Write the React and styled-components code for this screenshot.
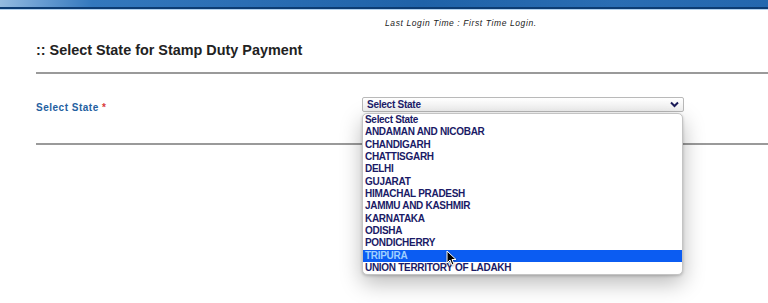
import styled, { createGlobalStyle } from 'styled-components'

const GlobalStyle = createGlobalStyle`
	body {
		margin: 0;
		background: #fff;
		font-family: 'Liberation Sans', Arial, sans-serif;
	}
`

const Page = styled.div`
	position: relative;
	width: 768px;
	height: 303px;
	overflow: hidden;
	background: #fff;
`

const TopBar = styled.div`
	height: 7px;
	background: linear-gradient(
		90deg,
		#94bbe0 0%,
		#6a9ed3 5%,
		#3378bd 12%,
		#2c6fb5 30%,
		#1f62a8 55%,
		#2a6db3 80%,
		#2467ae 100%
	);
	border-bottom: 2px solid #0c3c73;
	box-shadow: 0 1px 0 #b4d2ee;
`

const LoginInfo = styled.div`
	padding: 9px 0 0 385px;
	font-size: 8.5px;
	font-style: italic;
	letter-spacing: 0.6px;
	color: #222;
	line-height: 10px;
`

const Content = styled.div`
	padding-left: 36px;
`

const Heading = styled.h2`
	margin: 0;
	padding-top: 14px;
	font-size: 14.4px;
	line-height: 17px;
	font-weight: bold;
	color: #222;
`

const Rule = styled.div`
	height: 2px;
	background: #9a9a9a;
	margin-top: ${(p) => p.$gap}px;
`

const FormRow = styled.div`
	display: flex;
	align-items: flex-start;
	padding: 23px 0 30px;
`

const Label = styled.div`
	width: 326px;
	padding-top: 5px;
	font-size: 10px;
	font-weight: bold;
	color: #24609f;
	letter-spacing: 0.5px;

	span {
		color: #d93a3a;
	}
`

const SelectBox = styled.div`
	width: 322px;
	height: 15px;
	box-sizing: border-box;
	border: 1px solid #b9b9b9;
	border-radius: 2px;
	background: linear-gradient(#ffffff, #f1f1f1);
	padding: 0 4px;
	font-size: 10px;
	font-weight: bold;
	line-height: 13px;
	color: #1c1c6b;
	letter-spacing: -0.25px;
	display: flex;
	align-items: center;
	justify-content: space-between;
`

const Dropdown = styled.ul`
	position: absolute;
	top: 113px;
	left: 362px;
	width: 321px;
	margin: 0;
	padding: 0;
	list-style: none;
	background: #fff;
	border: 1px solid #c4c4c4;
	border-radius: 5px;
	box-sizing: border-box;
	box-shadow: 0 8px 22px rgba(0, 0, 0, 0.28), 0 1px 3px rgba(0, 0, 0, 0.2);
	overflow: hidden;
`

const Option = styled.li`
	height: 12.33px;
	line-height: 12.33px;
	padding-left: 2px;
	font-size: 10px;
	font-weight: bold;
	letter-spacing: -0.3px;
	white-space: nowrap;
	color: ${(p) => (p.$active ? '#9fd0ff' : '#1a1a66')};
	background: ${(p) => (p.$active ? '#0b5cf2' : 'transparent')};
`

const Cursor = styled.svg`
	position: absolute;
	left: 446px;
	top: 250px;
	filter: drop-shadow(0 1px 1px rgba(0, 0, 0, 0.35));
`

const states = [
	'Select State',
	'ANDAMAN AND NICOBAR',
	'CHANDIGARH',
	'CHATTISGARH',
	'DELHI',
	'GUJARAT',
	'HIMACHAL PRADESH',
	'JAMMU AND KASHMIR',
	'KARNATAKA',
	'ODISHA',
	'PONDICHERRY',
	'TRIPURA',
	'UNION TERRITORY OF LADAKH',
]

function App() {
	return (
		<>
			<GlobalStyle />
			<Page>
				<TopBar />
				<LoginInfo>Last Login Time : First Time Login.</LoginInfo>
				<Content>
					<Heading>:: Select State for Stamp Duty Payment</Heading>
					<Rule $gap={13} />
					<FormRow>
						<Label>
							Select State <span>*</span>
						</Label>
						<SelectBox>
							Select State
							<svg width="9" height="7" viewBox="0 0 9 7">
								<path d="M1 1.5 L4.5 5 L8 1.5" fill="none" stroke="#1c1c5a" strokeWidth="2" />
							</svg>
						</SelectBox>
					</FormRow>
					<Rule $gap={0} />
				</Content>
				<Dropdown>
					{states.map((s) => (
						<Option key={s} $active={s === 'TRIPURA'}>
							{s}
						</Option>
					))}
				</Dropdown>
				<Cursor width="11" height="16" viewBox="0 0 11 16">
					<path d="M1 1 L1 13 L4 10 L6 15 L8 14 L6 9.5 L10 9.5 Z" fill="#000" stroke="#fff" strokeWidth="1" />
				</Cursor>
			</Page>
		</>
	)
}

export default App
